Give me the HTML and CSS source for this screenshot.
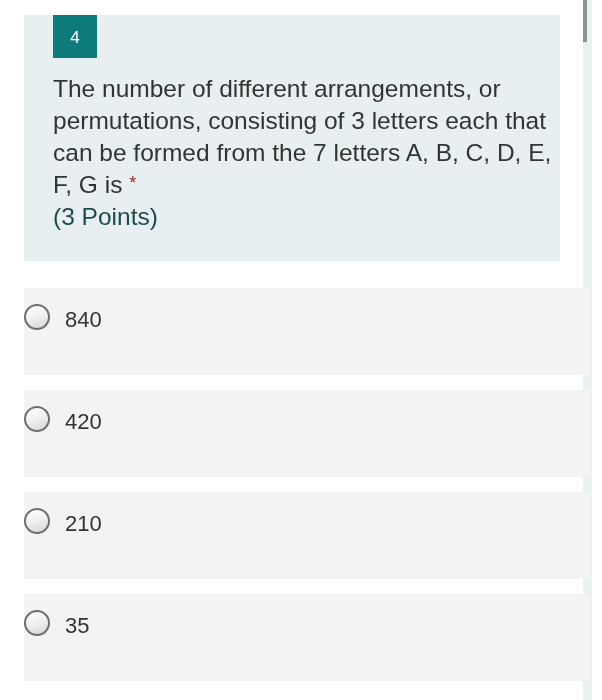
FILE: index.html
```html
<!DOCTYPE html>
<html lang="en">
<head>
    <meta charset="UTF-8">
    <meta name="viewport" content="width=device-width, initial-scale=1.0">
    <title>Question 4</title>
    <link rel="stylesheet" href="styles.css">
</head>
<body>
    <div class="scrollbar">
        <div class="scrollbar-thumb"></div>
    </div>

    <div class="form">
        <div class="question">
            <div class="question-number">4</div>
            <div class="question-title">
                The number of different arrangements, or<br>
                permutations, consisting of 3 letters each that<br>
                can be formed from the 7 letters A, B, C, D, E,<br>
                F, G is <span class="required">*</span>
            </div>
            <div class="question-points">(3 Points)</div>
        </div>

        <div class="choices">
            <label class="choice">
                <span class="radio"></span>
                <span class="choice-text">840</span>
            </label>
            <label class="choice">
                <span class="radio"></span>
                <span class="choice-text">420</span>
            </label>
            <label class="choice">
                <span class="radio"></span>
                <span class="choice-text">210</span>
            </label>
            <label class="choice">
                <span class="radio"></span>
                <span class="choice-text">35</span>
            </label>
        </div>
    </div>
</body>
</html>
```

FILE: styles.css
```css
body {
    margin: 0;
    padding: 0;
    background-color: #ffffff;
    color: #333333;
    font-family: "Liberation Sans", Arial, sans-serif;
}

/* Fake overlay scrollbar on the right edge */
.scrollbar {
    position: fixed;
    top: 0;
    right: 10px;
    width: 9px;
    height: 100%;
    background-color: #e9f1f2;
    z-index: 0;
}

.scrollbar-thumb {
    width: 4px;
    height: 42px;
    background-color: #8c9393;
    position: relative;
    z-index: 2;
}

.form {
    position: relative;
    z-index: 1;
    padding: 15px 0 0 24px;
}

.question {
    width: 507px;
    padding: 0 0 28px 29px;
    background-color: #e8eff1;
}

.question-number {
    width: 44px;
    height: 43px;
    padding-top: 2px;
    box-sizing: border-box;
    background-color: #0d7a7c;
    color: #ffffff;
    font-size: 17px;
    line-height: 41px;
    text-align: center;
}

.question-title {
    margin-top: 15px;
    font-size: 24.5px;
    line-height: 32px;
    color: #333333;
}

.required {
    color: #a4262c;
    font-size: 18px;
    line-height: 0;
    vertical-align: 4px;
}

.question-points {
    font-size: 24.5px;
    line-height: 32px;
    color: #1f4a4b;
}

.choices {
    margin-top: 27px;
    display: flex;
    flex-direction: column;
    gap: 15px;
}

.choice {
    display: flex;
    align-items: flex-start;
    gap: 15px;
    width: 566px;
    height: 87px;
    padding-top: 16px;
    box-sizing: border-box;
    background-color: #f3f3f3;
}

.radio {
    width: 26px;
    height: 26px;
    box-sizing: border-box;
    border: 2px solid #6e6e6e;
    border-radius: 50%;
    background: linear-gradient(160deg, #ffffff 0%, #f2f2f2 45%, #d4d4d4 100%);
}

.choice-text {
    padding-top: 2px;
    font-size: 22px;
    line-height: 28px;
    color: #333333;
}
```
